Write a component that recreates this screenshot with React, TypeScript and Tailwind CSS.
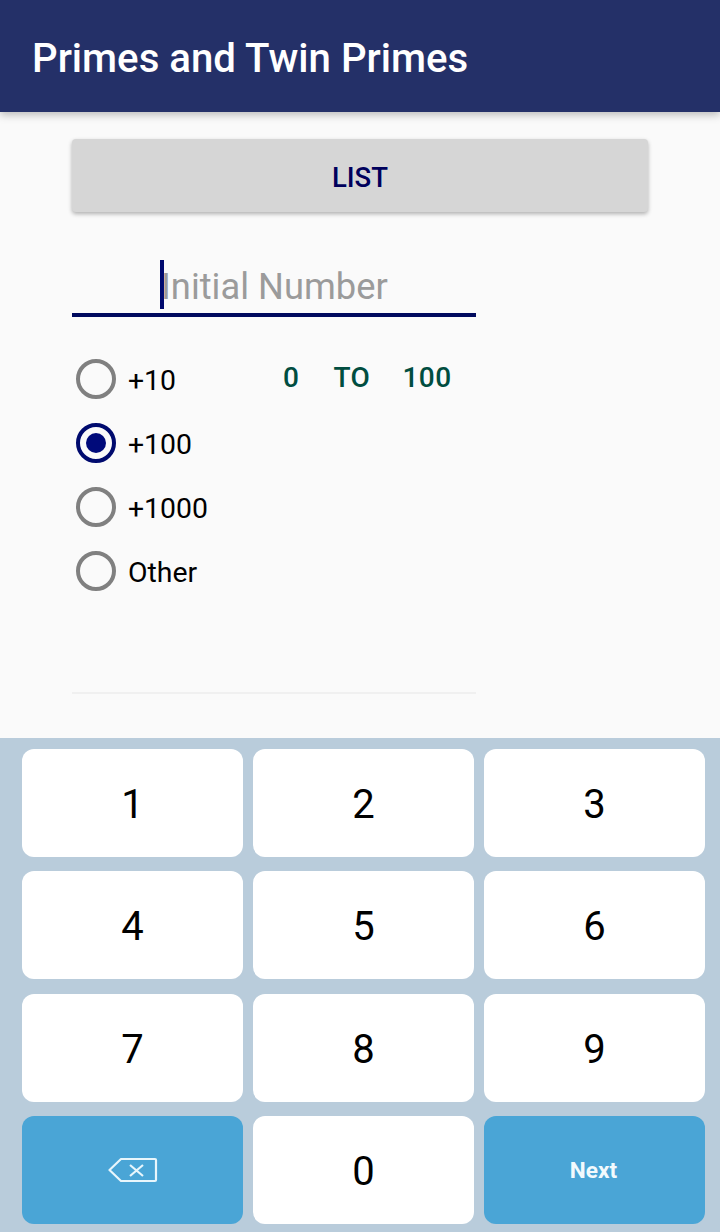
const font = { fontFamily: 'Roboto, sans-serif' };

function Radio({ label, checked }: { label: string; checked?: boolean }) {
  return (
    <div className="h-[64px] flex items-center">
      <div
        className={
          checked
            ? 'w-[40px] h-[40px] rounded-full border-[4px] border-[#000a6e] flex items-center justify-center'
            : 'w-[40px] h-[40px] rounded-full border-[4px] border-[#808080]'
        }
      >
        {checked && <div className="w-[20px] h-[20px] rounded-full bg-[#000a7a]" />}
      </div>
      <span className="ml-[12px] pt-[3px] text-[28.4px] leading-[40px] text-black">{label}</span>
    </div>
  );
}

function Key({ label, className }: { label: string; className: string }) {
  return (
    <div className={'h-[108px] pt-[4px] rounded-[12px] bg-white flex items-center justify-center text-[40px] text-black ' + className}>
      {label}
    </div>
  );
}

export default function App() {
  return (
    <div className="w-[720px] h-[1232px] bg-[#fafafa] flex flex-col overflow-hidden" style={font}>
      <header className="h-[112px] shrink-0 bg-[#243068] flex items-center pl-[32px] pt-[7px] shadow-[0_3px_8px_rgba(0,0,0,0.25)] z-10">
        <h1 className="text-[40.2px] font-medium text-white">Primes and Twin Primes</h1>
      </header>

      <main className="h-[626px] shrink-0 pl-[72px] pt-[27px]">
        <div className="w-[576px] h-[73px] pt-[4px] rounded-[4px] bg-[#d6d6d6] shadow-[0_2px_4px_rgba(0,0,0,0.3)] flex items-center justify-center text-[27.5px] font-medium text-[#00005c]">
          LIST
        </div>

        <div className="w-[404px] h-[57px] mt-[48px] border-b-[4px] border-[#000a5e] pl-[88px] flex">
          <div className="w-[4px] h-[49px] bg-[#000a6e] shrink-0" />
          <span className="text-[36.3px] leading-[54px] text-[#9b9b9b] -ml-[3px]">Initial Number</span>
        </div>

        <div className="w-[404px] flex mt-[30px] pl-[4px]">
          <div className="w-[207px]">
            <Radio label="+10" />
            <Radio label="+100" checked />
            <Radio label="+1000" />
            <Radio label="Other" />
          </div>
          <div className="h-[56px] pt-[6px] flex items-center text-[28px] font-medium tracking-[0.5px] text-[#004d40]">
            <span>0</span>
            <span className="ml-[34px]">TO</span>
            <span className="ml-[32px]">100</span>
          </div>
        </div>

        <div className="w-[404px] h-[2px] mt-[89px] bg-[#f0f0f0]" />
      </main>

      <section className="flex-1 bg-[#b9ccdb] pl-[22px] pt-[11px]">
        <div className="flex gap-[10px]">
          <Key label="1" className="w-[221px]" />
          <Key label="2" className="w-[221px]" />
          <Key label="3" className="w-[221px]" />
        </div>
        <div className="flex gap-[10px] mt-[14px]">
          <Key label="4" className="w-[221px]" />
          <Key label="5" className="w-[221px]" />
          <Key label="6" className="w-[221px]" />
        </div>
        <div className="flex gap-[10px] mt-[15px]">
          <Key label="7" className="w-[221px]" />
          <Key label="8" className="w-[221px]" />
          <Key label="9" className="w-[221px]" />
        </div>
        <div className="flex gap-[10px] mt-[14px]">
          <div className="w-[221px] h-[108px] rounded-[12px] bg-[#4aa5d6] flex items-center justify-center">
            <svg width="50" height="26" viewBox="0 0 50 26" fill="none" stroke="#e8f6fc" strokeWidth="2.2">
              <path d="M1.5 13 L13 2 H47 Q48 2 48 3 V23 Q48 24 47 24 H13 Z" strokeLinejoin="round" />
              <path d="M22 8 L35 19 M35 8 L22 19" />
            </svg>
          </div>
          <Key label="0" className="w-[221px]" />
          <div className="w-[221px] h-[108px] pt-[2px] pr-[2px] rounded-[12px] bg-[#4aa5d6] flex items-center justify-center text-[22.6px] font-bold text-[#f2fafd]">
            Next
          </div>
        </div>
      </section>
    </div>
  );
}
